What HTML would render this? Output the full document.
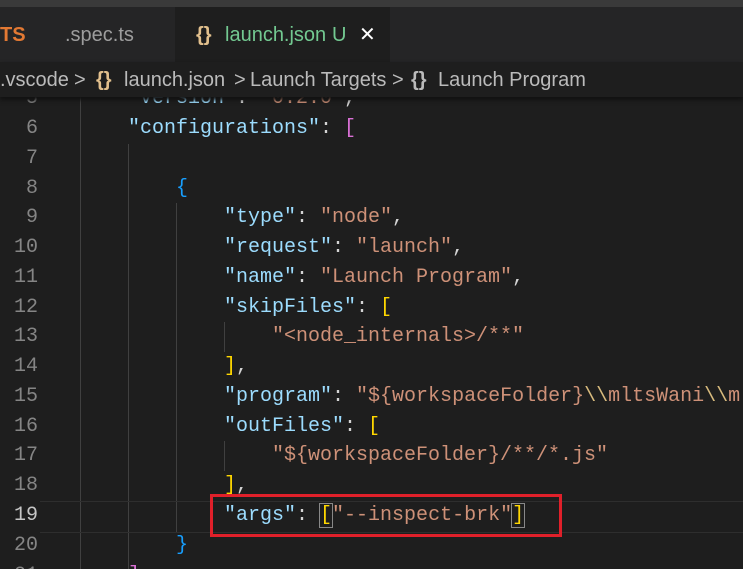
<!DOCTYPE html><html><head><style>
html,body{margin:0;width:743px;height:569px;overflow:hidden}
body{background:#1e1e1e;position:relative;font-family:"Liberation Sans",sans-serif}
.top{position:absolute;left:0;top:0;width:743px;height:7px;background:#3a3a3a}
.tabs{position:absolute;left:0;top:7px;width:743px;height:55px;background:#252526}
.t{position:absolute;top:7px;height:55px;line-height:56px;font-size:20px;color:#9d9d9d;white-space:nowrap}
.crumbbar{position:absolute;left:0;top:62px;width:743px;height:35px;background:#1e1e1e;box-shadow:0 3px 4px #111;z-index:2}
.cr{position:absolute;top:62px;height:36px;line-height:37px;font-size:20px;color:#bbb;z-index:3;white-space:nowrap}
.ln{position:absolute;left:0;width:38px;text-align:right;font:20px "Liberation Mono",monospace;color:#858585;height:30px;line-height:30px}
.c{position:absolute;font:20px "Liberation Mono",monospace;height:30px;line-height:30px;white-space:pre;color:#d4d4d4}
.k{color:#9cdcfe}.s{color:#ce9178}.e{color:#d7ba7d}.p{color:#da70d6}.b{color:#179fff}.y{color:#ffd700}
.g{position:absolute;width:1px;background:#404040}
</style></head><body>
<div class="top"></div><div class="tabs"></div>
<div style="position:absolute;left:175px;top:7px;width:215px;height:55px;background:#1e1e1e"></div>
<div class="t" style="left:0;color:#e37933;font-weight:bold">TS</div>
<div class="t" style="left:65px">.spec.ts</div>
<div class="t" style="left:196px;color:#e2c08d;font-weight:bold">{}</div>
<div class="t" style="left:225px;color:#73c991">launch.json</div>
<div class="t" style="left:332px;color:#73c991">U</div>
<div class="t" style="left:359px;color:#fff">✕</div>
<div class="crumbbar"></div>
<div class="cr" style="left:0">.vscode</div>
<div class="cr" style="left:74px">&gt;</div>
<div class="cr" style="left:96px;color:#e2c08d;font-weight:bold">{}</div>
<div class="cr" style="left:124px">launch.json</div>
<div class="cr" style="left:234px">&gt;</div>
<div class="cr" style="left:250px">Launch Targets</div>
<div class="cr" style="left:392px">&gt;</div>
<div class="cr" style="left:411px;font-weight:bold">{}</div>
<div class="cr" style="left:438px">Launch Program</div>

<div class="g" style="left:80px;top:97px;height:472px"></div>
<div class="g" style="left:128px;top:144px;height:425px"></div>
<div class="g" style="left:176px;top:203px;height:330px"></div>
<div class="g" style="left:224px;top:322px;height:30px"></div>
<div class="g" style="left:224px;top:441px;height:30px"></div>
<div style="position:absolute;left:40px;top:501px;width:703px;height:30px;border-top:1px solid #2e2e2e;border-bottom:1px solid #2e2e2e"></div>

<div class="ln" style="top:84px">5</div><div class="c" style="left:128px;top:84px"><span class="k">"version"</span>: <span class="s">"0.2.0"</span>,</div>
<div class="ln" style="top:114px">6</div><div class="c" style="left:128px;top:114px"><span class="k">"configurations"</span>: <span class="p">[</span></div>
<div class="ln" style="top:144px">7</div>
<div class="ln" style="top:174px">8</div><div class="c" style="left:176px;top:174px"><span class="b">{</span></div>
<div class="ln" style="top:203px">9</div><div class="c" style="left:224px;top:203px"><span class="k">"type"</span>: <span class="s">"node"</span>,</div>
<div class="ln" style="top:233px">10</div><div class="c" style="left:224px;top:233px"><span class="k">"request"</span>: <span class="s">"launch"</span>,</div>
<div class="ln" style="top:263px">11</div><div class="c" style="left:224px;top:263px"><span class="k">"name"</span>: <span class="s">"Launch Program"</span>,</div>
<div class="ln" style="top:293px">12</div><div class="c" style="left:224px;top:293px"><span class="k">"skipFiles"</span>: <span class="y">[</span></div>
<div class="ln" style="top:322px">13</div><div class="c" style="left:272px;top:322px"><span class="s">"&lt;node_internals&gt;/**"</span></div>
<div class="ln" style="top:352px">14</div><div class="c" style="left:224px;top:352px"><span class="y">]</span>,</div>
<div class="ln" style="top:382px">15</div><div class="c" style="left:224px;top:382px"><span class="k">"program"</span>: <span class="s">"${workspaceFolder}<span class="e">\\</span>mltsWani<span class="e">\\</span>m</span></div>
<div class="ln" style="top:412px">16</div><div class="c" style="left:224px;top:412px"><span class="k">"outFiles"</span>: <span class="y">[</span></div>
<div class="ln" style="top:441px">17</div><div class="c" style="left:272px;top:441px"><span class="s">"${workspaceFolder}/**/*.js"</span></div>
<div class="ln" style="top:471px">18</div><div class="c" style="left:224px;top:471px"><span class="y">]</span>,</div>
<div class="ln" style="top:501px;color:#c6c6c6">19</div><div class="c" style="left:224px;top:501px"><span class="k">"args"</span>: <span class="y" style="outline:1px solid #888">[</span><span class="s">"--inspect-brk"</span><span class="y" style="outline:1px solid #888">]</span></div>
<div class="ln" style="top:531px">20</div><div class="c" style="left:176px;top:531px"><span class="b">}</span></div>
<div class="ln" style="top:561px">21</div><div class="c" style="left:128px;top:561px"><span class="p">]</span></div>
<div style="position:absolute;left:210px;top:494px;width:346px;height:37px;border:3px solid #e0202a"></div>
</body></html>
